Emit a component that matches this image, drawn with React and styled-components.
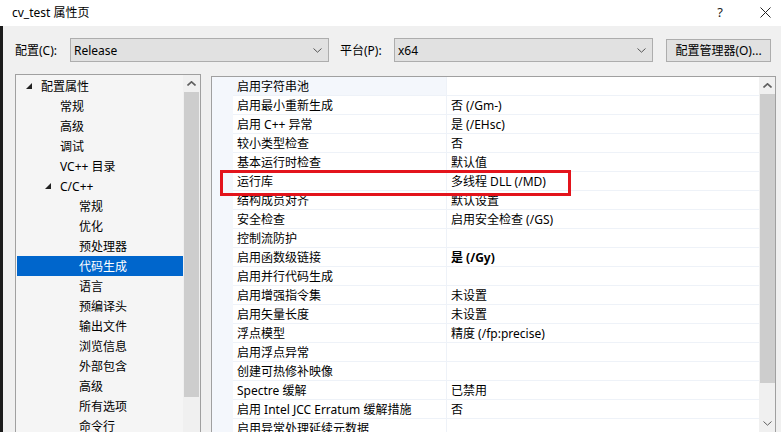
import React from 'react';
import styled, { createGlobalStyle } from 'styled-components';

const GlobalStyle = createGlobalStyle`
	html, body {
		margin: 0;
		padding: 0;
		width: 781px;
		height: 432px;
		overflow: hidden;
		background: #f0f0f0;
	}
	* {
		box-sizing: border-box;
	}
`;

const FONT = `"Segoe UI", "Noto Sans", "Noto Sans CJK SC", sans-serif`;

const Window = styled.div`
	width: 781px;
	height: 432px;
	display: flex;
	flex-direction: column;
	font-family: ${FONT};
	font-size: 12px;
	color: #000;
	overflow: hidden;
`;

const TitleBar = styled.div`
	height: 26px;
	flex: none;
	background: #fff;
	display: flex;
	align-items: center;
	padding-left: 12px;
	padding-bottom: 2px;
`;

const Title = styled.div`
	flex: 1;
	font-size: 12px;
`;

const TitleButton = styled.div`
	width: ${(p) => p.$w}px;
	margin-right: ${(p) => p.$mr || 0}px;
	height: 24px;
	display: flex;
	align-items: center;
	justify-content: center;
	font-size: 13px;
	color: #222;
`;

const Body = styled.div`
	flex: 1;
	display: flex;
	flex-direction: column;
	background: #f0f0f0;
	border-left: 3px solid #1b1b1b;
	padding: 12px 0 0 12px;
	min-height: 0;
`;

const Toolbar = styled.div`
	height: 24px;
	display: flex;
	align-items: center;
	flex: none;
`;

const Label = styled.span`
	width: ${(p) => p.$w}px;
	flex: none;
	white-space: nowrap;
`;

const Select = styled.div`
	width: 259px;
	height: 24px;
	flex: none;
	background: #e1e1e1;
	border: 1px solid #adadad;
	display: flex;
	align-items: center;
	padding: 0 6px 0 3px;
	margin-right: ${(p) => p.$mr}px;
`;

const SelectText = styled.span`
	flex: 1;
`;

const Button = styled.div`
	width: 105px;
	height: 23px;
	flex: none;
	background: #e1e1e1;
	border: 1px solid #adadad;
	display: flex;
	align-items: center;
	justify-content: center;
	white-space: nowrap;
`;

const Panels = styled.div`
	flex: 1;
	display: flex;
	gap: 10px;
	margin-top: 12px;
	min-height: 0;
`;

const TreePanel = styled.div`
	width: 186px;
	flex: none;
	border: 1px solid #a0a0a0;
	border-bottom: none;
	background: #f5f5f5;
	display: flex;
	overflow: hidden;
`;

const TreeList = styled.div`
	flex: 1;
	padding: 1px 0 0 1px;
`;

const TreeRow = styled.div`
	height: 20px;
	display: flex;
	align-items: center;
	padding-left: ${(p) => p.$indent}px;
	background: ${(p) => (p.$selected ? '#0066cc' : 'transparent')};
	color: ${(p) => (p.$selected ? '#fff' : '#000')};
	white-space: nowrap;
`;

const Expander = styled.span`
	width: 15px;
	flex: none;
	display: flex;
	align-items: center;
`;

const ScrollBar = styled.div`
	width: ${(p) => p.$w}px;
	flex: none;
	background: #f0f0f0;
	display: flex;
	flex-direction: column;
	align-items: center;
`;

const ScrollArrow = styled.div`
	height: 17px;
	width: 100%;
	flex: none;
	display: flex;
	align-items: center;
	justify-content: center;
`;

const ScrollThumb = styled.div`
	width: 15px;
	height: ${(p) => p.$h}px;
	flex: none;
	background: #cdcdcd;
`;

const ScrollSpacer = styled.div`
	flex: 1;
`;

const GridPanel = styled.div`
	position: relative;
	flex: 1;
	margin-top: 2px;
	margin-right: 5px;
	border: 1px solid #a0a0a0;
	border-bottom: none;
	background: #fff;
	display: flex;
	overflow: hidden;
`;

const Gutter = styled.div`
	width: 21px;
	flex: none;
	background: #f4f7fc;
`;

const Grid = styled.div`
	flex: 1;
	display: flex;
	flex-direction: column;
`;

const GridRow = styled.div`
	height: 19px;
	flex: none;
	display: grid;
	grid-template-columns: 214px 1fr;
	border-bottom: 1px solid #eef2f8;
`;

const NameCell = styled.div`
	padding-left: 4px;
	display: flex;
	align-items: center;
	white-space: nowrap;
	background: ${(p) => (p.$shaded ? '#f4f7fc' : '#fff')};
	border-right: 1px solid #eef2f8;
`;

const ValueCell = styled.div`
	padding-left: 4px;
	display: flex;
	align-items: center;
	white-space: nowrap;
	font-weight: ${(p) => (p.$bold ? 700 : 400)};
`;

const Highlight = styled.div`
	position: absolute;
	left: 8px;
	top: 93px;
	width: 351px;
	height: 26px;
	border: 3px solid #e3141c;
	pointer-events: none;
`;

const Chevron = ({ up, color = '#555' }) => (
	<svg width="9" height="5" viewBox="0 0 9 5">
		<polyline
			points={up ? '0.5,4.5 4.5,0.8 8.5,4.5' : '0.5,0.5 4.5,4.2 8.5,0.5'}
			fill="none"
			stroke={color}
			strokeWidth={up ? 1.6 : 1}
		/>
	</svg>
);

const Triangle = () => (
	<svg width="6" height="6" viewBox="0 0 6 6">
		<polygon points="6,0 6,6 0,6" fill="#222" />
	</svg>
);

const treeItems = [
	{ text: '配置属性', level: 0, open: true },
	{ text: '常规', level: 1 },
	{ text: '高级', level: 1 },
	{ text: '调试', level: 1 },
	{ text: 'VC++ 目录', level: 1 },
	{ text: 'C/C++', level: 1, open: true },
	{ text: '常规', level: 2 },
	{ text: '优化', level: 2 },
	{ text: '预处理器', level: 2 },
	{ text: '代码生成', level: 2, selected: true },
	{ text: '语言', level: 2 },
	{ text: '预编译头', level: 2 },
	{ text: '输出文件', level: 2 },
	{ text: '浏览信息', level: 2 },
	{ text: '外部包含', level: 2 },
	{ text: '高级', level: 2 },
	{ text: '所有选项', level: 2 },
	{ text: '命令行', level: 2 },
];

const props = [
	['启用字符串池', ''],
	['启用最小重新生成', '否 (/Gm-)'],
	['启用 C++ 异常', '是 (/EHsc)'],
	['较小类型检查', '否'],
	['基本运行时检查', '默认值'],
	['运行库', '多线程 DLL (/MD)'],
	['结构成员对齐', '默认设置'],
	['安全检查', '启用安全检查 (/GS)'],
	['控制流防护', ''],
	['启用函数级链接', '是 (/Gy)', true],
	['启用并行代码生成', ''],
	['启用增强指令集', '未设置'],
	['启用矢量长度', '未设置'],
	['浮点模型', '精度 (/fp:precise)'],
	['启用浮点异常', ''],
	['创建可热修补映像', ''],
	['Spectre 缓解', '已禁用'],
	['启用 Intel JCC Erratum 缓解措施', '否'],
	['启用异常处理延续元数据', ''],
];

// text offset from the list's left edge for each tree level
const levelOffset = [24, 43, 62];

function TreeItem({ item }) {
	const offset = levelOffset[item.level];
	return (
		<TreeRow $indent={item.open ? offset - 15 : offset} $selected={item.selected}>
			{item.open && (
				<Expander>
					<Triangle />
				</Expander>
			)}
			{item.text}
		</TreeRow>
	);
}

export default function App() {
	return (
		<Window>
			<GlobalStyle />
			<TitleBar>
				<Title>cv_test 属性页</Title>
				<TitleButton $w={34} $mr={12}>?</TitleButton>
				<TitleButton $w={32}>
					<svg width="11" height="11" viewBox="0 0 11 11">
						<path d="M0.5 0.5 L10.5 10.5 M10.5 0.5 L0.5 10.5" stroke="#222" strokeWidth="1" />
					</svg>
				</TitleButton>
			</TitleBar>
			<Body>
				<Toolbar>
					<Label $w={55}>配置(C):</Label>
					<Select $mr={11}>
						<SelectText>Release</SelectText>
						<Chevron />
					</Select>
					<Label $w={54}>平台(P):</Label>
					<Select $mr={13}>
						<SelectText>x64</SelectText>
						<Chevron />
					</Select>
					<Button>配置管理器(O)...</Button>
				</Toolbar>
				<Panels>
					<TreePanel>
						<TreeList>
							{treeItems.map((item, i) => (
								<TreeItem key={i} item={item} />
							))}
						</TreeList>
						<ScrollBar $w={17}>
							<ScrollArrow>
								<Chevron up color="#606060" />
							</ScrollArrow>
							<ScrollThumb $h={305} />
							<ScrollSpacer />
						</ScrollBar>
					</TreePanel>
					<GridPanel>
						<Gutter />
						<Grid>
							{props.map(([name, value, bold], i) => (
								<GridRow key={i}>
									<NameCell $shaded={i === 0}>{name}</NameCell>
									<ValueCell $bold={bold}>{value}</ValueCell>
								</GridRow>
							))}
						</Grid>
						<ScrollBar $w={16}>
							<ScrollArrow>
								<Chevron up color="#606060" />
							</ScrollArrow>
							<ScrollThumb $h={289} />
							<ScrollSpacer />
							<ScrollArrow>
								<Chevron color="#606060" />
							</ScrollArrow>
						</ScrollBar>
						<Highlight />
					</GridPanel>
				</Panels>
			</Body>
		</Window>
	);
}
